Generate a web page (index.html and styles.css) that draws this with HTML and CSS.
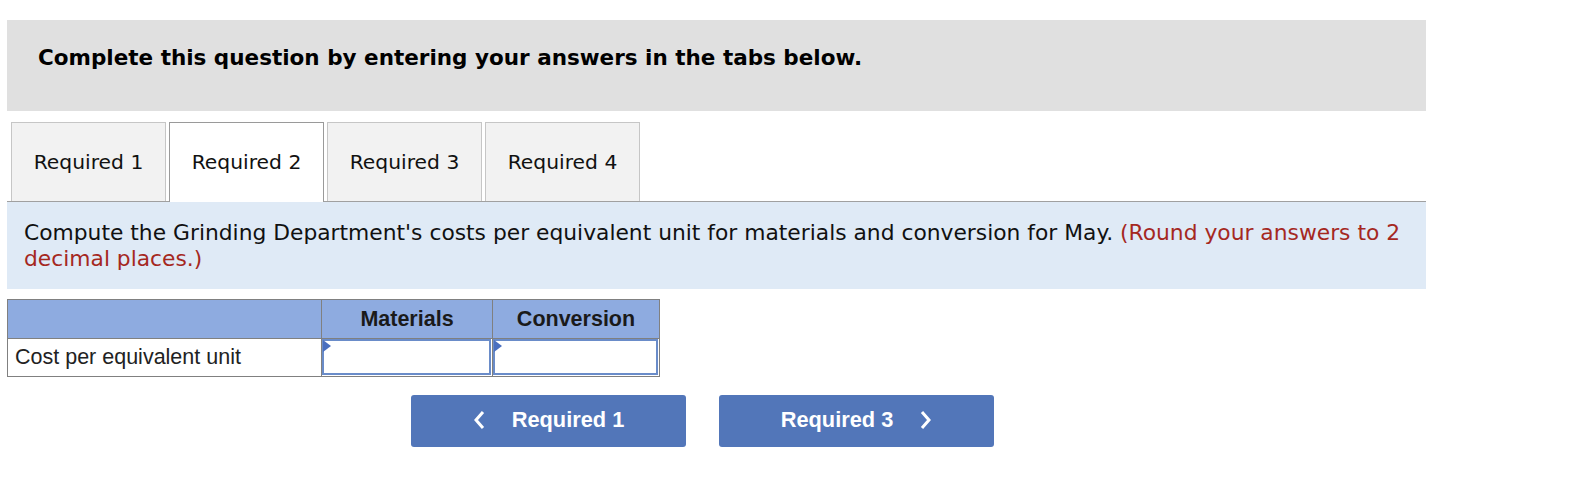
FILE: index.html
```html
<!DOCTYPE html>
<html>
<head>
<meta charset="utf-8">
<link rel="stylesheet" href="styles.css">
</head>
<body>
<div class="page">
  <div class="banner">Complete this question by entering your answers in the tabs below.</div>
  <div class="tabs">
    <div class="tab">Required 1</div>
    <div class="tab active">Required 2</div>
    <div class="tab">Required 3</div>
    <div class="tab">Required 4</div>
  </div>
  <div class="prompt">Compute the Grinding Department's costs per equivalent unit for materials and conversion for May. <span class="note">(Round your answers to 2 decimal places.)</span></div>
  <table class="grid">
    <tr class="head">
      <th class="c1"></th>
      <th class="c2">Materials</th>
      <th class="c3">Conversion</th>
    </tr>
    <tr class="row">
      <td class="label">Cost per equivalent unit</td>
      <td class="cell"><div class="inp"><span class="mark"></span></div></td>
      <td class="cell"><div class="inp"><span class="mark"></span></div></td>
    </tr>
  </table>
  <div class="nav">
    <div class="btn">
      <svg class="chev" width="12" height="20" viewBox="0 0 12 20"><polyline points="10,2 3,10 10,18" fill="none" stroke="#fff" stroke-width="3"/></svg>
      <span>Required 1</span>
    </div>
    <div class="btn">
      <span>Required 3</span>
      <svg class="chev" width="12" height="20" viewBox="0 0 12 20"><polyline points="2,2 9,10 2,18" fill="none" stroke="#fff" stroke-width="3"/></svg>
    </div>
  </div>
</div>
</body>
</html>
```

FILE: styles.css
```css
html, body {
  margin: 0;
  padding: 0;
  background: #fff;
}
.page {
  width: 1419px;
  margin-left: 7px;
  font-family: "DejaVu Sans", sans-serif;
  color: #111;
}
.banner {
  margin-top: 20px;
  height: 91px;
  box-sizing: border-box;
  background: #e0e0e0;
  padding: 25px 0 0 31px;
  font-family: "DejaVu Sans", sans-serif;
  font-weight: bold;
  font-size: 21.5px;
  line-height: 26px;
  color: #000;
}
.tabs {
  display: flex;
  margin-top: 11px;
  padding-left: 4px;
  border-bottom: 1px solid #a0a0a0;
  height: 79px;
}
.tab {
  width: 155px;
  height: 79px;
  box-sizing: border-box;
  margin-right: 3px;
  background: #f2f2f2;
  border: 1px solid #c6c6c6;
  border-bottom: none;
  display: flex;
  align-items: center;
  justify-content: center;
  font-size: 20.3px;
  color: #111;
}
.tab.active {
  background: #fff;
  border-color: #9a9a9a;
  height: 80px;
  padding-bottom: 1px;
  margin-bottom: -1px;
  position: relative;
}
.prompt {
  background: #dfeaf6;
  padding: 18px 17px 17px 17px;
  font-size: 21.8px;
  line-height: 26px;
  color: #111;
}
.note {
  color: #a5281f;
}
.grid {
  margin-top: 10px;
  border-collapse: collapse;
  font-family: "Liberation Sans", Arial, sans-serif;
  font-size: 21.5px;
}
.grid th, .grid td {
  border: 1px solid #808080;
  padding: 0;
}
.head th {
  background: #8eabe0;
  height: 38px;
  font-weight: bold;
  color: #1a1a1a;
  text-align: center;
}
.c1 { width: 313px; }
.c2 { width: 170px; }
.c3 { width: 166px; }
.row td {
  height: 37px;
}
.label {
  padding-left: 7px !important;
  color: #222;
}
.cell {
  vertical-align: top;
}
.inp {
  position: relative;
  height: 36px;
  margin: 0 1px 0 0;
  box-sizing: border-box;
  border: 2px solid #6a8cc9;
  background: #fff;
}
.mark {
  position: absolute;
  left: -1px;
  top: -1px;
  width: 0;
  height: 0;
  border-left: 8px solid #4a6fbf;
  border-top: 6px solid transparent;
  border-bottom: 6px solid transparent;
}
.nav {
  display: flex;
  gap: 33px;
  margin-top: 18px;
  margin-left: 404px;
}
.btn {
  width: 275px;
  height: 52px;
  box-sizing: border-box;
  background: #5276b9;
  border-radius: 3px;
  display: flex;
  align-items: center;
  justify-content: center;
  gap: 27px;
  color: #fff;
  font-family: "Liberation Sans", Arial, sans-serif;
  font-weight: bold;
  font-size: 21.8px;
  padding-bottom: 2px;
}
.chev {
  display: block;
}
```
